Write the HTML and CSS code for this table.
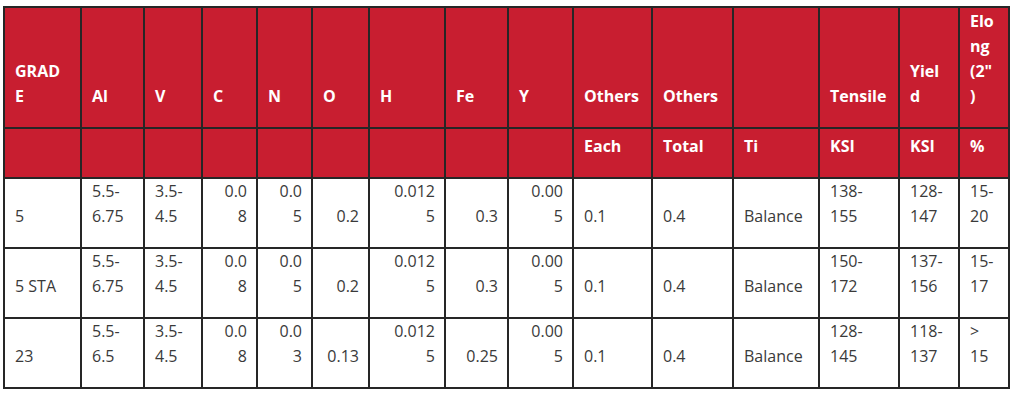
FILE: index.html
```html
<!DOCTYPE html>
<html lang="en">
<head>
<meta charset="utf-8">
<title>Titanium grades</title>
<link rel="stylesheet" href="styles.css">
</head>
<body>
<table class="grades">
  <colgroup>
    <col class="w77"><col class="w63"><col class="w58"><col class="w55"><col class="w55">
    <col class="w57"><col class="w76"><col class="w63"><col class="w65"><col class="w79">
    <col class="w81"><col class="w86"><col class="w80"><col class="w60"><col class="w50">
  </colgroup>
  <thead>
    <tr class="h1">
      <th>GRAD<br>E</th><th>Al</th><th>V</th><th>C</th><th>N</th><th>O</th><th>H</th><th>Fe</th><th>Y</th>
      <th>Others</th><th>Others</th><th></th><th>Tensile</th><th>Yiel<br>d</th><th>Elo<br>ng<br>(2"<br>)</th>
    </tr>
    <tr class="h2">
      <th></th><th></th><th></th><th></th><th></th><th></th><th></th><th></th><th></th>
      <th>Each</th><th>Total</th><th>Ti</th><th>KSI</th><th>KSI</th><th>%</th>
    </tr>
  </thead>
  <tbody>
    <tr class="r70">
      <td>5</td><td>5.5-<br>6.75</td><td>3.5-<br>4.5</td><td class="r">0.0<br>8</td><td class="r">0.0<br>5</td>
      <td class="r">0.2</td><td class="r">0.012<br>5</td><td class="r">0.3</td><td class="r">0.00<br>5</td>
      <td>0.1</td><td>0.4</td><td>Balance</td><td>138-<br>155</td><td>128-<br>147</td><td>15-<br>20</td>
    </tr>
    <tr class="r69">
      <td>5 STA</td><td>5.5-<br>6.75</td><td>3.5-<br>4.5</td><td class="r">0.0<br>8</td><td class="r">0.0<br>5</td>
      <td class="r">0.2</td><td class="r">0.012<br>5</td><td class="r">0.3</td><td class="r">0.00<br>5</td>
      <td>0.1</td><td>0.4</td><td>Balance</td><td>150-<br>172</td><td>137-<br>156</td><td>15-<br>17</td>
    </tr>
    <tr class="r70">
      <td>23</td><td>5.5-<br>6.5</td><td>3.5-<br>4.5</td><td class="r">0.0<br>8</td><td class="r">0.0<br>3</td>
      <td class="r">0.13</td><td class="r">0.012<br>5</td><td class="r">0.25</td><td class="r">0.00<br>5</td>
      <td>0.1</td><td>0.4</td><td>Balance</td><td>128-<br>145</td><td>118-<br>137</td><td>&gt;<br>15</td>
    </tr>
  </tbody>
</table>
</body>
</html>
```
FILE: styles.css
```css
html, body {
  margin: 0;
  padding: 0;
  background: #ffffff;
}
body {
  padding: 6px 0 0 3px;
  font-family: "Open Sans", "Liberation Sans", sans-serif;
  font-size: 16px;
  line-height: 25px;
  color: #3a3a3a;
}
.grades {
  border-collapse: collapse;
  table-layout: fixed;
  width: 1007px;
  border: 2px solid #262626;
}
.grades th,
.grades td {
  border: 2px solid #262626;
  padding: 0 9px 18px 10px;
  vertical-align: bottom;
  text-align: left;
  white-space: nowrap;
  overflow: hidden;
}
.grades th {
  background: #c81e30;
  color: #ffffff;
  font-weight: 700;
}
.grades td.r { text-align: right; }
.h1 { height: 121px; }
.h2 { height: 50px; }
.r70 { height: 70px; }
.r69 { height: 69px; }
.w77 { width: 77px; }
.w63 { width: 63px; }
.w58 { width: 58px; }
.w55 { width: 55px; }
.w57 { width: 57px; }
.w76 { width: 76px; }
.w65 { width: 65px; }
.w79 { width: 79px; }
.w81 { width: 81px; }
.w86 { width: 86px; }
.w80 { width: 80px; }
.w60 { width: 60px; }
.w50 { width: 50px; }
```
